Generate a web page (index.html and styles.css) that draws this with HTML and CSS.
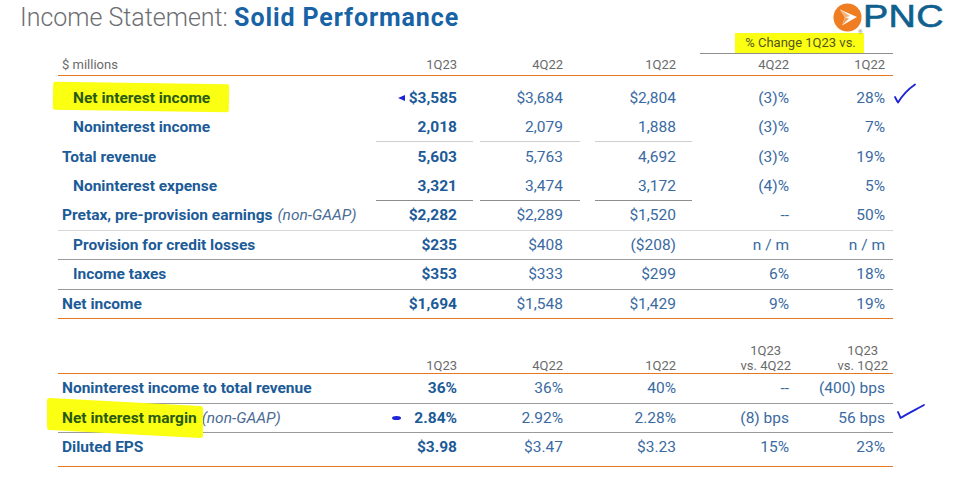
FILE: index.html
```html
<!DOCTYPE html>
<html>
<head>
<meta charset="utf-8">
<link rel="stylesheet" href="styles.css">
</head>
<body>
<div class="slide">
  <header class="top">
    <h1 class="title"><span class="t-light">Income Statement:</span> <span class="t-bold">Solid Performance</span></h1>
    <div class="logo">
      <svg class="logo-mark" width="29" height="29" viewBox="0 0 29 29">
        <circle cx="14.5" cy="14.5" r="14" fill="#ef7d22"/>
        <path d="M7 6.5 L24 14 L9 22.5 L12 14.5 Z" fill="#fff"/>
        <path d="M7 6.5 L12 14.5 L17 13 Z" fill="#f6b27a"/>
        <path d="M12 14.5 L9 22.5 L16 15.5 Z" fill="#f3a061"/>
      </svg>
      <span class="logo-text">PNC</span>
      <span class="reg">®</span>
    </div>
  </header>

  <section class="tbl t1">
    <div class="row change">
      <div class="change-cell"><span class="hl-head">% Change 1Q23 vs.</span></div>
    </div>
    <div class="row head orange">
      <div class="lab">$ millions</div>
      <div class="c1">1Q23</div>
      <div class="c2">4Q22</div>
      <div class="c3">1Q22</div>
      <div class="c4">4Q22</div>
      <div class="c5">1Q22</div>
    </div>
    <div class="row first">
      <div class="lab indent"><span class="hl hl1">Net interest income</span></div>
      <div class="c1 b"><span class="blob-arrow"></span>$3,585</div>
      <div class="c2">$3,684</div>
      <div class="c3">$2,804</div>
      <div class="c4">(3)%</div>
      <div class="c5">28%</div>
    </div>
    <div class="row">
      <div class="lab indent">Noninterest income</div>
      <div class="c1 b u u1 light">2,018</div>
      <div class="c2 u u2 light">2,079</div>
      <div class="c3 u u3 light">1,888</div>
      <div class="c4">(3)%</div>
      <div class="c5">7%</div>
    </div>
    <div class="row">
      <div class="lab">Total revenue</div>
      <div class="c1 b">5,603</div>
      <div class="c2">5,763</div>
      <div class="c3">4,692</div>
      <div class="c4">(3)%</div>
      <div class="c5">19%</div>
    </div>
    <div class="row">
      <div class="lab indent">Noninterest expense</div>
      <div class="c1 b u u1 dark">3,321</div>
      <div class="c2 u u2 dark">3,474</div>
      <div class="c3 u u3 dark">3,172</div>
      <div class="c4">(4)%</div>
      <div class="c5">5%</div>
    </div>
    <div class="row line-light">
      <div class="lab">Pretax, pre-provision earnings <em class="note">(non-GAAP)</em></div>
      <div class="c1 b">$2,282</div>
      <div class="c2">$2,289</div>
      <div class="c3">$1,520</div>
      <div class="c4">--</div>
      <div class="c5">50%</div>
    </div>
    <div class="row line">
      <div class="lab indent">Provision for credit losses</div>
      <div class="c1 b">$235</div>
      <div class="c2">$408</div>
      <div class="c3">($208)</div>
      <div class="c4">n / m</div>
      <div class="c5">n / m</div>
    </div>
    <div class="row line">
      <div class="lab indent">Income taxes</div>
      <div class="c1 b">$353</div>
      <div class="c2">$333</div>
      <div class="c3">$299</div>
      <div class="c4">6%</div>
      <div class="c5">18%</div>
    </div>
    <div class="row orange">
      <div class="lab">Net income</div>
      <div class="c1 b">$1,694</div>
      <div class="c2">$1,548</div>
      <div class="c3">$1,429</div>
      <div class="c4">9%</div>
      <div class="c5">19%</div>
    </div>
  </section>

  <section class="tbl t2">
    <div class="row head2 orange">
      <div class="lab"></div>
      <div class="c1">1Q23</div>
      <div class="c2">4Q22</div>
      <div class="c3">1Q22</div>
      <div class="c4 two">1Q23<br>vs. 4Q22</div>
      <div class="c5 two">1Q23<br>vs. 1Q22</div>
    </div>
    <div class="row line">
      <div class="lab">Noninterest income to total revenue</div>
      <div class="c1 b">36%</div>
      <div class="c2">36%</div>
      <div class="c3">40%</div>
      <div class="c4">--</div>
      <div class="c5">(400) bps</div>
    </div>
    <div class="row line">
      <div class="lab"><span class="hl hl2">Net interest margin</span> <em class="note">(non-GAAP)</em></div>
      <div class="c1 b"><span class="blob-dot"></span>2.84%</div>
      <div class="c2">2.92%</div>
      <div class="c3">2.28%</div>
      <div class="c4">(8) bps</div>
      <div class="c5">56 bps</div>
    </div>
    <div class="row orange last">
      <div class="lab">Diluted EPS</div>
      <div class="c1 b">$3.98</div>
      <div class="c2">$3.47</div>
      <div class="c3">$3.23</div>
      <div class="c4">15%</div>
      <div class="c5">23%</div>
    </div>
  </section>

  <svg class="check check1" width="26" height="24" viewBox="0 0 26 24">
    <path d="M2 14 C3 16 4 18 5 19.5 C9 13 14 7 22 1.5" fill="none" stroke="#1c24d6" stroke-width="1.8" stroke-linecap="round" stroke-linejoin="round"/>
  </svg>
  <svg class="check check2" width="32" height="20" viewBox="0 0 32 20">
    <path d="M2 9 C3 11 4 13 4.5 15 C11 11 19 7 28 2" fill="none" stroke="#1c24d6" stroke-width="1.8" stroke-linecap="round" stroke-linejoin="round"/>
  </svg>
</div>
</body>
</html>
```

FILE: styles.css
```css
* {
  box-sizing: border-box;
  margin: 0;
  padding: 0;
}

body {
  width: 956px;
  height: 484px;
  background: #ffffff;
  font-family: Roboto, "Liberation Sans", sans-serif;
  overflow: hidden;
}

.slide {
  position: relative;
  width: 956px;
  height: 484px;
}

.top {
  display: flex;
  justify-content: space-between;
  align-items: flex-start;
  height: 33px;
  padding-left: 20px;
  padding-right: 25px;
}

.title {
  margin-top: 3px;
  font-size: 25px;
  line-height: 30px;
  white-space: nowrap;
}

.t-light {
  font-weight: 300;
  color: #6d6e71;
}

.t-bold {
  font-weight: 700;
  color: #1763a6;
  letter-spacing: 0.9px;
}

.logo {
  position: relative;
  display: flex;
  align-items: center;
  height: 34px;
  gap: 1px;
}

.logo-mark {
  width: 29px;
  height: 29px;
}

.logo-text {
  display: inline-block;
  width: 68px;
  font-family: "Liberation Sans", sans-serif;
  font-size: 31px;
  line-height: 34px;
  color: #10608f;
  letter-spacing: 0.3px;
  white-space: nowrap;
  transform: scaleX(1.22);
  transform-origin: left center;
  -webkit-text-stroke: 0.6px #10608f;
}

.reg {
  position: absolute;
  left: 25px;
  top: 28px;
  font-size: 6px;
  line-height: 7px;
  color: #888;
}

.tbl {
  margin-left: 58px;
  width: 835px;
  font-size: 15.5px;
}

.row {
  display: grid;
  grid-template-columns: 310px 105px 107px 112px 113px 88px;
  height: 29.5px;
}

.row > div {
  display: flex;
  align-items: center;
  justify-content: flex-end;
  color: #3a6aa2;
  white-space: nowrap;
}

.row > .lab {
  justify-content: flex-start;
  padding-left: 4px;
  font-weight: 700;
  color: #1c5b97;
}

.row > .lab.indent {
  padding-left: 15px;
}

.c1 { padding-right: 16px; }
.c2 { padding-right: 17px; }
.c3 { padding-right: 16px; }
.c4 { padding-right: 16px; }
.c5 { padding-right: 8px; }

.row > .b {
  font-weight: 700;
  color: #1c5b97;
}

.u1 { margin-left: 8px; }
.u2 { margin-left: 7px; }
.u3 { margin-left: 15px; }
.u.light { border-bottom: 1px solid #cfcfcf; }
.u.dark { border-bottom: 1px solid #8e8e8e; }

.line-light { border-bottom: 1px solid #d6d6d6; }
.line { border-bottom: 1px solid #9a9a9a; }
.orange { border-bottom: 1.5px solid #e87722; }

.note {
  font-style: italic;
  font-weight: 400;
  color: #4a6b93;
  margin-left: 5px;
}

/* header rows */
.change {
  height: 21px;
}

.change-cell {
  grid-column: 5 / 7;
  margin-left: 8px;
  border-bottom: 1px solid #8f8f8f;
  justify-content: center !important;
  padding-left: 6px;
}

.hl-head {
  background: #fbff12;
  color: #55561c;
  font-size: 13px;
  line-height: 20px;
  padding: 0 8px 0 10px;
}

.head {
  height: 22px;
}

.head > div,
.head2 > div {
  font-size: 13px;
  color: #6a6a6a !important;
  font-weight: 400 !important;
}

.first {
  margin-top: 7px;
}

/* highlights */
.hl {
  position: relative;
  z-index: 0;
}

.hl::before {
  content: "";
  position: absolute;
  z-index: -1;
  background: #fbff12;
}

.hl1 {
  color: #2a5a10;
}

.hl1::before {
  left: -20px;
  right: -19px;
  top: -6px;
  bottom: -4px;
  border-radius: 2px;
  transform: rotate(0.8deg);
}

.hl2 {
  color: #2a5a10;
}

.hl2::before {
  left: -15px;
  right: -6px;
  top: -7px;
  bottom: -7px;
  border-radius: 3px;
  transform: skewY(3deg);
}

/* second table */
.t2 {
  margin-top: 21px;
}

.head2 {
  height: 34px;
}

.head2 > div {
  align-items: flex-end !important;
  padding-bottom: 0;
  line-height: 15px;
}

.head2 > .two {
  text-align: center;
  justify-content: flex-end;
}

.head2 > .c4 { padding-right: 14px; }
.head2 > .c5 { padding-right: 5px; }

.last {
  height: 34px;
}

.last > div {
  align-items: flex-start !important;
  padding-top: 5px;
}

/* annotations */
.blob-arrow {
  display: inline-block;
  width: 0;
  height: 0;
  border-top: 3px solid transparent;
  border-bottom: 3px solid transparent;
  border-right: 7px solid #1c24d6;
  margin-right: 4px;
}

.blob-dot {
  display: inline-block;
  width: 9px;
  height: 4px;
  background: #1c24d6;
  border-radius: 50%;
  margin-right: 13px;
}

.check {
  position: absolute;
}

.check1 {
  left: 893px;
  top: 83px;
}

.check2 {
  left: 896px;
  top: 403px;
}
```
